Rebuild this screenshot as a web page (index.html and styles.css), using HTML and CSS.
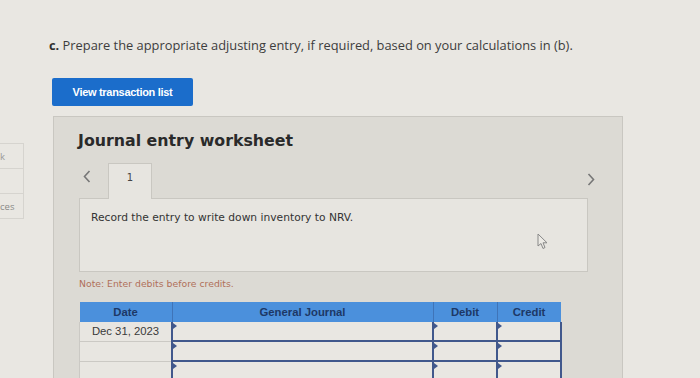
FILE: index.html
```html
<!DOCTYPE html>
<html>
<head>
<meta charset="utf-8">
<link rel="stylesheet" href="styles.css">
</head>
<body>
<div class="page">
  <aside class="side">
    <div class="side-item"><span>k</span></div>
    <div class="side-item"><span></span></div>
    <div class="side-item"><span>ces</span></div>
  </aside>
  <main class="main">
    <p class="question"><b>c.</b> Prepare the appropriate adjusting entry, if required, based on your calculations in (b).</p>
    <button class="btn">View transaction list</button>
    <section class="panel">
      <h2 class="panel-title">Journal entry worksheet</h2>
      <div class="tabs">
        <span class="nav prev">
          <svg width="8" height="13" viewBox="0 0 8 13"><path d="M6.5 1 L1.5 6.5 L6.5 12" fill="none" stroke="#777" stroke-width="1.6"/></svg>
        </span>
        <span class="tab">1</span>
        <span class="nav next">
          <svg width="8" height="13" viewBox="0 0 8 13"><path d="M1.5 1 L6.5 6.5 L1.5 12" fill="none" stroke="#777" stroke-width="1.6"/></svg>
        </span>
      </div>
      <div class="entry-box">
        <p class="entry-text">Record the entry to write down inventory to NRV.</p>
        <svg class="cursor" width="12" height="17" viewBox="0 0 12 17"><path d="M1 1 L1 13 L4 10.5 L6 15.5 L8 14.5 L6 9.8 L10 9.8 Z" fill="#eceae5" stroke="#888" stroke-width="1"/></svg>
      </div>
      <p class="note">Note: Enter debits before credits.</p>
      <table class="journal">
        <thead>
          <tr><th class="c-date">Date</th><th class="c-gj">General Journal</th><th class="c-amt">Debit</th><th class="c-amt">Credit</th></tr>
        </thead>
        <tbody>
          <tr><td class="date">Dec 31, 2023</td><td class="in"></td><td class="in"></td><td class="in"></td></tr>
          <tr><td class="date"></td><td class="in"></td><td class="in"></td><td class="in"></td></tr>
          <tr><td class="date"></td><td class="in"></td><td class="in"></td><td class="in"></td></tr>
        </tbody>
      </table>
    </section>
  </main>
</div>
</body>
</html>
```

FILE: styles.css
```css
html, body {
  margin: 0;
  padding: 0;
  background: #e9e7e2;
  overflow: hidden;
  height: 378px;
}
.page {
  display: flex;
  align-items: flex-start;
}
.side {
  width: 24px;
  padding-top: 143px;
  display: flex;
  flex-direction: column;
}
.side-item {
  height: 26px;
  border: 1px solid #d6d4cf;
  border-left: none;
  margin-bottom: -1px;
  font-family: "Open Sans", sans-serif;
  font-size: 9.5px;
  color: #8a8a88;
  display: flex;
  align-items: center;
  padding-left: 0;
  box-sizing: border-box;
  white-space: nowrap;
}
.side-item:first-child span { margin-left: 0; color: #9a9a98; }
.main {
  padding-left: 25px;
  padding-top: 37px;
  flex: 1;
}
.question {
  margin: 0;
  font-family: "Open Sans", sans-serif;
  font-size: 12.85px;
  line-height: 16px;
  color: #3d3d3d;
}
.question b { font-weight: 700; color: #2f2f2f; }
.btn {
  display: block;
  margin: 25px 0 0 3px;
  width: 141px;
  height: 28px;
  border: none;
  border-radius: 2px;
  background: #1b6dcb;
  color: #fff;
  font-family: "Liberation Sans", Arial, sans-serif;
  font-weight: 700;
  font-size: 11px;
  letter-spacing: -0.3px;
  padding: 0;
}
.panel {
  margin: 10px 0 0 4px;
  width: 570px;
  height: 300px;
  box-sizing: border-box;
  background: #dcdad4;
  border: 1px solid #c9c7c1;
  padding: 14px 0 0 24px;
}
.panel-title {
  margin: 0;
  font-family: "DejaVu Sans", Verdana, sans-serif;
  font-weight: 700;
  font-size: 15.8px;
  line-height: 20px;
  color: #2a2a2a;
}
.tabs {
  display: flex;
  align-items: flex-start;
  margin-top: 12px;
  margin-left: 1px;
  width: 516px;
  height: 36px;
}
.nav { display: flex; }
.prev { margin-left: 4px; margin-top: 7px; }
.next { margin-left: auto; margin-top: 10px; }
.tab {
  margin-left: 17px;
  width: 44px;
  height: 36px;
  box-sizing: border-box;
  border: 1px solid #c9c7c1;
  border-bottom: none;
  background: #e7e5e0;
  font-family: "DejaVu Sans", Verdana, sans-serif;
  font-size: 10px;
  color: #444;
  text-align: center;
  line-height: 28px;
  position: relative;
  z-index: 1;
}
.entry-box {
  position: relative;
  margin-top: -1px;
  margin-left: 1px;
  width: 509px;
  height: 74px;
  box-sizing: border-box;
  background: #e7e5e0;
  border: 1px solid #c9c7c1;
  padding: 12px 0 0 11px;
}
.entry-text {
  margin: 0;
  font-family: "DejaVu Sans", Verdana, sans-serif;
  font-size: 10.7px;
  line-height: 14px;
  color: #333;
}
.cursor {
  position: absolute;
  left: 457px;
  top: 34px;
}
.note {
  margin: 6px 0 0 1px;
  font-family: "DejaVu Sans", Verdana, sans-serif;
  font-size: 9.3px;
  line-height: 12px;
  color: #b0705a;
}
.journal {
  margin: 12px 0 0 1px;
  width: 477px;
  border-collapse: collapse;
  table-layout: fixed;
  font-family: "Liberation Sans", Arial, sans-serif;
  font-size: 11.3px;
}
.journal th {
  height: 20px;
  padding: 0;
  background: #4b90dc;
  color: #1d3866;
  font-weight: 700;
  border-left: 1px solid #3f74b8;
  text-align: center;
}
.journal th:first-child { border-left: none; }
.c-date { width: 92px; }
.c-gj { width: 260px; }
.c-amt { width: 63px; }
.journal td {
  height: 18px;
  padding: 0;
  background: #e8e6e1;
}
.journal td.date {
  text-align: center;
  color: #3a3a3a;
  border-bottom: 1px solid #cbc9c4;
  border-left: 1px solid #cbc9c4;
}
.journal td.in {
  position: relative;
  border-left: 2px solid #41588c;
  border-bottom: 2px solid #41588c;
  background: #e9e7e2;
}
.journal td.in:last-child { border-right: 2px solid #41588c; }
.journal td.in::before {
  content: "";
  position: absolute;
  left: 0;
  top: 1px;
  border-top: 3px solid transparent;
  border-bottom: 3px solid transparent;
  border-left: 4px solid #41588c;
}
```
